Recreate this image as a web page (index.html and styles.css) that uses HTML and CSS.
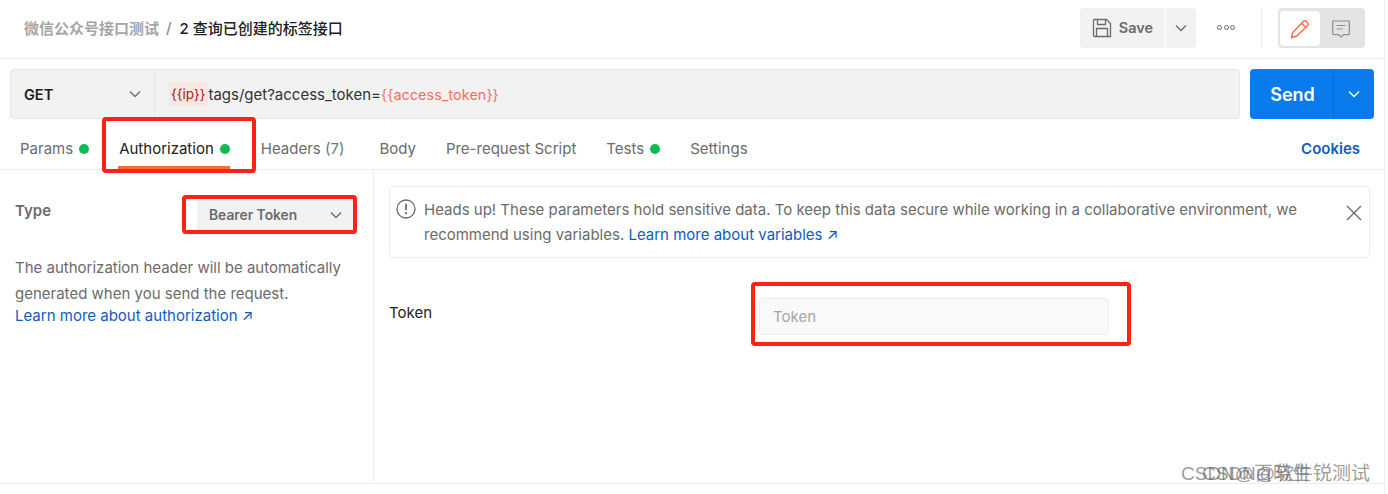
FILE: index.html
```html
<!DOCTYPE html>
<html lang="en">
<head>
<meta charset="utf-8">
<title>Postman request</title>
<link rel="stylesheet" href="styles.css">
</head>
<body>
<div class="app">
  <header class="topbar">
    <div class="crumbs"><span class="crumb-parent">微信公众号接口测试</span><span class="crumb-sep">/</span><span class="crumb-current">2 查询已创建的标签接口</span></div>
    <div class="actions">
      <button class="save"><svg class="save-icon" viewBox="0 0 20 20" width="20" height="20"><path d="M2.5 1.500h12l4 4v13h-16a1 1 0 0 1-1-1v-15a1 1 0 0 1 1-1z M5.500 1.500v5h8v-5 M4.500 18.500v-8h11v8" fill="none" stroke="#6b6b6b" stroke-width="1.300"/></svg>Save</button>
      <button class="save-more"><svg viewBox="0 0 12 8" width="12" height="8"><path d="M1 1.500l5 5 5-5" fill="none" stroke="#6b6b6b" stroke-width="1.300"/></svg></button>
      <div class="dots"><i></i><i></i><i></i></div>
      <div class="vrule"></div>
      <div class="toggle">
        <div class="toggle-on"><svg viewBox="0 0 20 20" width="20" height="20"><path d="M1.500 18.500l1.200-5L13.500 2.300a1.800 1.800 0 0 1 2.500 0l1.700 1.700a1.800 1.800 0 0 1 0 2.500L6.500 17.300z M11.800 4.300l3.900 3.900" fill="none" stroke="#ff6c37" stroke-width="1.400" stroke-linejoin="round"/></svg></div>
        <div class="toggle-off"><svg viewBox="0 0 20 20" width="20" height="20"><path d="M2.500 2h15a.8.8 0 0 1 .8.8v12a.8.8 0 0 1-.8.8h-5L10 18l-2.500-2.400h-5a.8.8 0 0 1-.8-.8v-12A.8.800 0 0 1 2.500 2z M5.500 6.500h9 M5.500 10h6" fill="none" stroke="#8c8c8c" stroke-width="1.200"/></svg></div>
      </div>
    </div>
  </header>

  <section class="urlrow">
    <div class="urlbox">
      <div class="method"><span>GET</span><svg viewBox="0 0 12 8" width="12" height="8"><path d="M1 1.500l5 5 5-5" fill="none" stroke="#6b6b6b" stroke-width="1.300"/></svg></div>
      <div class="url"><span class="var-bad">{{ip}}</span><span class="url-text">tags/get?access_token=</span><span class="var">{{access_token}}</span></div>
    </div>
    <div class="send"><span class="send-main">Send</span><span class="send-more"><svg viewBox="0 0 12 8" width="12" height="8"><path d="M1 1.500l5 5 5-5" fill="none" stroke="#fff" stroke-width="1.300"/></svg></span></div>
  </section>

  <nav class="tabs">
    <span class="tab t-params">Params<i class="dot"></i></span>
    <span class="tab tab-active t-auth">Authorization<i class="dot"></i></span>
    <span class="tab t-headers">Headers <em>(7)</em></span>
    <span class="tab t-body">Body</span>
    <span class="tab t-pre">Pre-request Script</span>
    <span class="tab t-tests">Tests<i class="dot"></i></span>
    <span class="tab">Settings</span>
    <span class="cookies">Cookies</span>
  </nav>

  <main class="panes">
    <aside class="left">
      <div class="type-row">
        <span class="type-label">Type</span>
        <div class="select"><span>Bearer Token</span><svg viewBox="0 0 12 8" width="12" height="8"><path d="M1 1.500l5 5 5-5" fill="none" stroke="#6b6b6b" stroke-width="1.300"/></svg></div>
      </div>
      <p class="desc">The authorization header will be automatically generated when you send the request.</p>
      <a class="link">Learn more about authorization ↗</a>
    </aside>
    <section class="right">
      <div class="alert">
        <svg class="alert-icon" viewBox="0 0 20 20" width="20" height="20"><circle cx="10" cy="10" r="9" fill="none" stroke="#6b6b6b" stroke-width="1.300"/><path d="M10 4.800v6.400" stroke="#6b6b6b" stroke-width="1.800"/><circle cx="10" cy="14.200" r="1.100" fill="#6b6b6b"/></svg>
        <p class="alert-text">Heads up! These parameters hold sensitive data. To keep this data secure while working in a collaborative environment, we recommend using variables. <a class="link">Learn more about variables ↗</a></p>
        <svg class="alert-close" viewBox="0 0 16 16" width="16" height="16"><path d="M1 1l14 14M15 1L1 15" stroke="#6b6b6b" stroke-width="1.400"/></svg>
      </div>
      <div class="token-row">
        <label class="token-label">Token</label>
        <div class="token-input">Token</div>
      </div>
    </section>
  </main>

  <div class="mark mark-a"></div>
  <div class="mark mark-b"></div>
  <div class="mark mark-c"></div>
  <div class="wm wm-1">CSDN@百晓生</div>
  <div class="wm wm-2">CSDN@软件锐测试</div>
</div>
</body>
</html>
```
FILE: styles.css
```css
* { box-sizing: border-box; }
html, body { margin: 0; padding: 0; background: #fff; }
body { font-family: Inter, "Noto Sans CJK SC", sans-serif; color: #6b6b6b; overflow: hidden; }
button { font: inherit; border: 0; padding: 0; color: inherit; }
.app { position: relative; width: 1385px; height: 494px; border-right: 1px solid #ededed; }

.topbar { height: 59px; border-bottom: 1px solid #ededed; display: flex; align-items: flex-start; justify-content: space-between; padding: 8px 19px 0 24px; }
.crumbs { display: flex; align-items: center; height: 38px; font-size: 15px; font-weight: 600; }
.crumb-parent { color: #a6a6a6; }
.crumb-sep { color: #8c8c8c; margin: 0 8px 0 7px; font-size: 15px; font-weight: 500; }
.crumb-current { color: #212121; font-size: 15px; font-weight: 500; }
.actions { display: flex; align-items: flex-start; }
.save { width: 85px; height: 40px; padding-bottom: 1px; background: #f2f2f2; border-radius: 4px 0 0 4px; display: flex; align-items: center; justify-content: center; gap: 7px; font-size: 14.500px; font-weight: 600; }
.save-more { width: 30px; height: 40px; margin-left: 1px; background: #f2f2f2; border-radius: 0 4px 4px 0; display: flex; align-items: center; justify-content: center; }
.dots { display: flex; gap: 1.500px; margin: 17px 26px 0 21px; }
.dots i { width: 5px; height: 5px; border: 1px solid #6b6b6b; border-radius: 50%; }
.vrule { width: 1px; height: 40px; background: #ededed; }
.toggle { display: flex; width: 87px; height: 40px; margin-left: 16px; padding: 3px 2px; background: #e4e4e4; border-radius: 4px; }
.toggle-on { width: 40px; height: 35px; background: #fff; border-radius: 4px; display: flex; align-items: center; justify-content: center; }
.toggle-off { width: 41px; height: 35px; display: flex; align-items: center; justify-content: center; }

.urlrow { display: flex; gap: 10px; padding: 10px 10px 0; height: 71px; }
.urlbox { flex: 0 0 1230px; height: 50px; display: flex; background: #f2f2f2; border: 1px solid #e6e6e6; border-radius: 4px; }
.method { width: 144px; border-right: 1px solid #e6e6e6; display: flex; align-items: center; justify-content: space-between; padding: 0 13px; font-size: 14.500px; font-weight: 600; color: #212121; }
.url { display: flex; align-items: center; padding-left: 14px; font-size: 15px; color: #212121; }
.var-bad { color: #a3201a; background: #fbe6e1; font-size: 13.500px; line-height: 24px; padding: 0 3px 0 2px; }
.url-text { color: #333; }
.var { color: #ff6c5c; font-size: 14.500px; }
.send { width: 125px; height: 50px; display: flex; background: #097bed; color: #fff; border-radius: 4px; font-size: 18px; font-weight: 600; }
.send-main { width: 84px; padding-left: 2px; display: flex; align-items: center; justify-content: center; border-right: 1px solid #0a6cd0; }
.send-more { flex: 1; display: flex; align-items: center; justify-content: center; }

.tabs { position: relative; height: 40px; border-bottom: 1px solid #ededed; display: flex; align-items: center; padding: 0 24px 2px 20px; font-size: 15px; }
.tab { display: flex; align-items: center; margin-right: 30px; white-space: pre; }
.tab em { font-style: normal; color: #5f7a80; }
.t-params { margin-right: 30px; }
.t-auth { margin-right: 31px; }
.t-headers { margin-right: 35px; }
.t-body { margin-right: 30px; }
.t-pre { margin-right: 30px; }
.t-tests { margin-right: 30px; }
.dot { width: 10px; height: 10px; border-radius: 50%; background: #0cbb52; margin-left: 6px; }
.tab-active { color: #212121; position: relative; }
.tab-active::after { content: ""; position: absolute; left: -1px; right: 0; top: 27px; height: 3px; background: #ff6c37; }
.cookies { margin-left: auto; color: #0f5bc4; font-weight: 600; }

.panes { display: flex; height: 314px; border-bottom: 1px solid #ededed; }
.left { width: 374px; border-right: 1px solid #ededed; padding: 0 17px 0 15px; font-size: 15px; }
.type-row { display: flex; justify-content: space-between; align-items: flex-start; height: 85px; padding-top: 29px; }
.type-label { font-weight: 600; line-height: 24px; }
.select { width: 158px; height: 33px; padding: 0 13px 2px 12px; margin-right: 1px; background: #f2f2f2; border-radius: 3px; display: flex; align-items: center; justify-content: space-between; font-size: 13.800px; font-weight: 600; }
.desc { margin: 0; line-height: 26px; }
.left .link { display: block; line-height: 18px; }
.link { color: #0f5bc4; }
.right { flex: 1; padding: 16px 14px 0 15px; }
.alert { display: flex; align-items: flex-start; height: 72px; border: 1px solid #ededed; border-radius: 4px; padding: 12px 7px 0 6px; font-size: 15px; }
.alert-icon { flex: none; margin-right: 8px; }
.alert-text { flex: 1; margin: -2px 0 0; line-height: 25px; }
.alert-close { flex: none; margin: 6px 0 0 30px; }
.token-row { display: flex; margin-top: 40px; font-size: 15px; }
.token-label { width: 370px; color: #212121; line-height: 30px; }
.token-input { width: 350px; height: 37px; background: #f9f9f9; border: 1px solid #ededed; border-radius: 4px; padding: 0 13px; line-height: 35px; color: #a6a6a6; }

.mark { position: absolute; border: 4px solid #ff2016; border-radius: 4px; }
.mark-a { left: 102px; top: 117px; width: 154px; height: 56px; }
.mark-b { left: 182px; top: 195px; width: 175px; height: 39px; }
.mark-c { left: 751px; top: 282px; width: 380px; height: 64px; }

.wm { position: absolute; top: 463px; font-size: 19px; line-height: 22px; color: rgba(100, 100, 100, .65); white-space: nowrap; font-family: "Liberation Sans", "Noto Sans CJK SC", sans-serif; }
.wm-1 { left: 1181px; }
.wm-2 { left: 1202px; }
```
